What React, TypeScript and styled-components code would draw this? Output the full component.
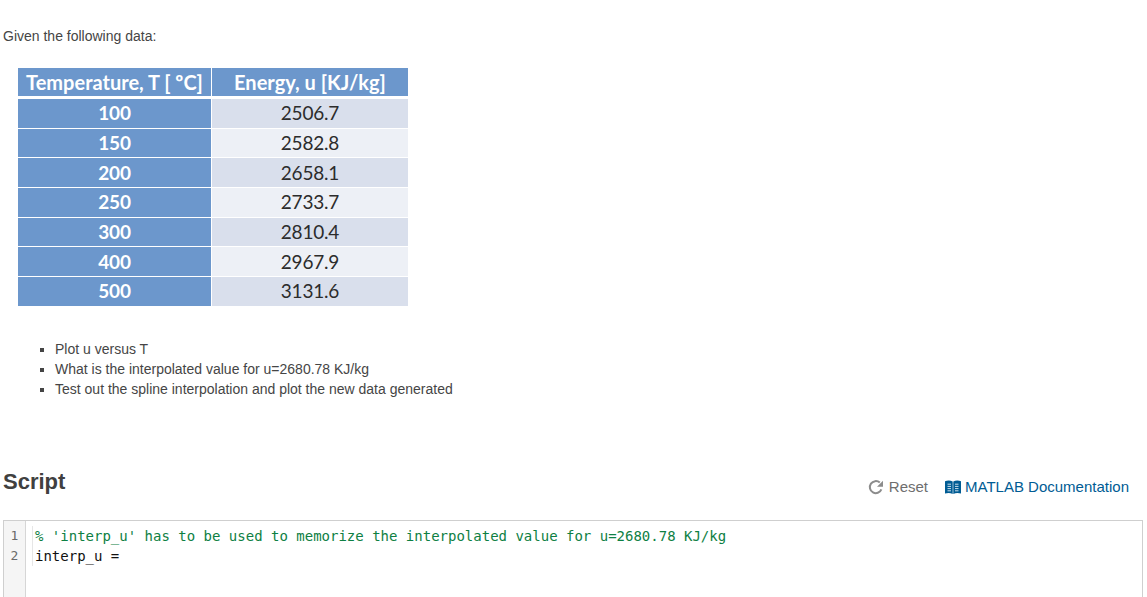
import * as React from 'react';
import styled, {createGlobalStyle} from "styled-components";

const rows = [
	['100', '2506.7'],
	['150', '2582.8'],
	['200', '2658.1'],
	['250', '2733.7'],
	['300', '2810.4'],
	['400', '2967.9'],
	['500', '3131.6'],
]

const bullets = [
	'Plot u versus T',
	'What is the interpolated value for u=2680.78 KJ/kg',
	'Test out the spline interpolation and plot the new data generated',
]

export default function App() {
	return (
		<Page>
			<GlobalStyle/>
			<Intro>Given the following data:</Intro>
			<DataTable>
				<HeadRow>
					<HeadCell>Temperature, T [ ºC]</HeadCell>
					<HeadCell>Energy, u [KJ/kg]</HeadCell>
				</HeadRow>
				{rows.map((row, i) => (
					<BodyRow key={row[0]}>
						<KeyCell>{row[0]}</KeyCell>
						<ValueCell $odd={i % 2 === 1}>{row[1]}</ValueCell>
					</BodyRow>
				))}
			</DataTable>
			<Bullets>
				{bullets.map(text => <li key={text}>{text}</li>)}
			</Bullets>
			<ScriptHeader>
				<Title>Script</Title>
				<Actions>
					<ResetLink>
						<svg width="16" height="16" viewBox="0 0 16 16" fill="none">
							<path d="M13.4 10.4A6 6 0 1 1 11.8 3.6" stroke="#8c8c8c" strokeWidth="2"/>
							<path d="M15 1.8V7.8H9Z" fill="#8c8c8c"/>
						</svg>
						Reset
					</ResetLink>
					<DocLink>
						<svg width="16" height="14" viewBox="0 0 16 14">
							<path d="M0 1.2C2.5 .2 5.5 .2 7.7 1.5V14C5.5 12.8 2.5 12.8 0 13.6ZM16 1.2C13.5 .2 10.5 .2 8.3 1.5V14C10.5 12.8 13.5 12.8 16 13.6Z" fill="#005c94"/>
							<path d="M2.5 4.2H6M2.5 6.4H6M2.5 8.6H6M2.5 10.8H6M10 4.2H13.5M10 6.4H13.5M10 8.6H13.5M10 10.8H13.5" stroke="#fff" strokeWidth="0.8"/>
						</svg>
						MATLAB Documentation
					</DocLink>
				</Actions>
			</ScriptHeader>
			<Editor>
				<Gutter>
					<span>1</span>
					<span>2</span>
				</Gutter>
				<Code>
					<CodeLine $comment>% 'interp_u' has to be used to memorize the interpolated value for u=2680.78 KJ/kg</CodeLine>
					<CodeLine>interp_u =</CodeLine>
				</Code>
			</Editor>
		</Page>
	)
}

const GlobalStyle = createGlobalStyle`
  html, body {
    margin: 0;
    padding: 0;
    background: #fff;
    overflow: hidden;
  }
`

const Page = styled.div`
  height: 597px;
  overflow: hidden;
  padding: 26px 4px 0 3px;
  box-sizing: border-box;
  font-family: "Liberation Sans", Arial, sans-serif;
  font-size: 14px;
  line-height: 20px;
  color: #454545;
`

const Intro = styled.p`
  margin: 0 0 22px;
`

const DataTable = styled.div`
  display: flex;
  flex-direction: column;
  width: 390px;
  margin-left: 15px;
  gap: 1px;
  font-family: Lato, "Open Sans", sans-serif;
  font-size: 19px;
  letter-spacing: -0.2px;
`

const HeadRow = styled.div`
  display: grid;
  grid-template-columns: 193px 196px;
  gap: 1px;
  height: 28px;
  margin-bottom: 2px;
  font-size: 20px;
  letter-spacing: 0;
`

const BodyRow = styled.div`
  display: grid;
  grid-template-columns: 193px 196px;
  gap: 1px;
  height: 28.66px;
`

const HeadCell = styled.div`
  display: flex;
  align-items: center;
  justify-content: center;
  background: #6c97cc;
  color: #fff;
  font-weight: 700;
  white-space: nowrap;
`

const KeyCell = styled(HeadCell)``

const ValueCell = styled.div<{$odd: boolean}>`
  display: flex;
  align-items: center;
  justify-content: center;
  background: ${props => (props.$odd ? '#edf0f6' : '#d9dfec')};
  color: #2c2c2c;
`

const Bullets = styled.ul`
  margin: 33.5px 0 0;
  padding: 0 0 0 52px;
  list-style: square;
`

const ScriptHeader = styled.div`
  display: flex;
  align-items: flex-start;
  justify-content: space-between;
  margin-top: 70px;
  height: 29px;
`

const Title = styled.h2`
  margin: 0;
  font-size: 22px;
  font-weight: 700;
  line-height: 26px;
  color: #404040;
`

const Actions = styled.div`
  display: flex;
  align-items: center;
  gap: 17px;
  padding: 8px 14px 0 0;
  font-size: 15px;
`

const ResetLink = styled.a`
  display: flex;
  align-items: center;
  gap: 5px;
  color: #6e6e6e;
`

const DocLink = styled.a`
  display: flex;
  align-items: center;
  gap: 4px;
  color: #005c94;
`

const Editor = styled.div`
  display: flex;
  margin-top: 22px;
  height: 90px;
  border: 1px solid #cfcfcf;
  border-bottom: none;
  background: #fff;
  font-family: "DejaVu Sans Mono", monospace;
  font-size: 14px;
  line-height: 20px;
`

const Gutter = styled.div`
  display: flex;
  flex-direction: column;
  width: 21px;
  padding: 5px 0 0;
  background: #f5f5f5;
  border-right: 1px solid #d6d6d6;
  color: #6a6a6a;
  font-size: 13px;
  text-align: center;
`

const Code = styled.div`
  margin: 5px 0 0 6px;
  padding-left: 2px;
  align-self: flex-start;
  border-left: 1px solid #e6e6e6;
`

const CodeLine = styled.div<{$comment?: boolean}>`
  white-space: pre;
  color: ${props => (props.$comment ? '#0e8043' : '#111')};
`
